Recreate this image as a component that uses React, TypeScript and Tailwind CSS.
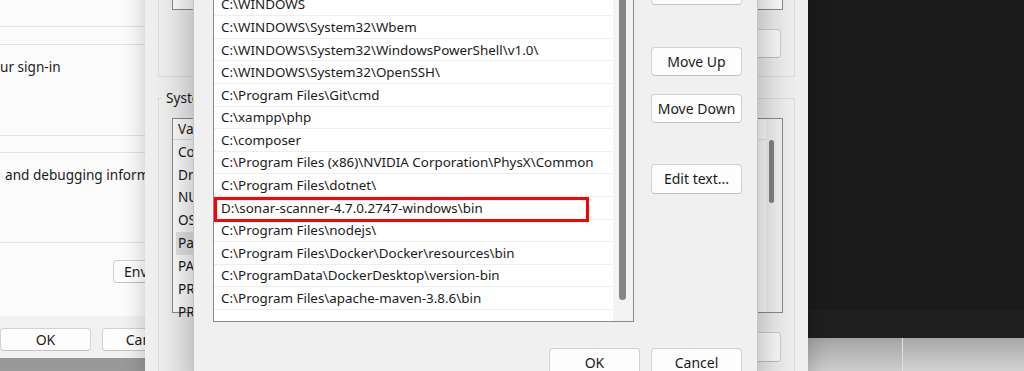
import React from 'react';

const font = "font-['Noto_Sans','Open_Sans',sans-serif]";

const pathEntries = [
  'C:\\WINDOWS\\system32',
  'C:\\WINDOWS',
  'C:\\WINDOWS\\System32\\Wbem',
  'C:\\WINDOWS\\System32\\WindowsPowerShell\\v1.0\\',
  'C:\\WINDOWS\\System32\\OpenSSH\\',
  'C:\\Program Files\\Git\\cmd',
  'C:\\xampp\\php',
  'C:\\composer',
  'C:\\Program Files (x86)\\NVIDIA Corporation\\PhysX\\Common',
  'C:\\Program Files\\dotnet\\',
  'D:\\sonar-scanner-4.7.0.2747-windows\\bin',
  'C:\\Program Files\\nodejs\\',
  'C:\\Program Files\\Docker\\Docker\\resources\\bin',
  'C:\\ProgramData\\DockerDesktop\\version-bin',
  'C:\\Program Files\\apache-maven-3.8.6\\bin',
];

const systemVars = [
  'ComSpec',
  'DriverData',
  'NUMBER_OF_PROCESSORS',
  'OS',
  'Path',
  'PATHEXT',
  'PROCESSOR_ARCHITECTURE',
  'PROCESSOR_IDENTIFIER',
];

const WinButton: React.FC<{ label: string; className?: string }> = ({ label, className = '' }) => (
  <button
    className={`bg-[#fdfdfd] border border-[#d1d1d1] border-b-[#c2c2c2] rounded-[4px] text-[14px] text-[#1b1b1b] leading-none flex items-center justify-center whitespace-nowrap ${className}`}
  >
    {label}
  </button>
);

const LeftDialog: React.FC = () => (
  <div className="absolute left-0 top-0 w-[160px] h-[358px] bg-[#fbfbfb] flex flex-col text-[13.6px] text-[#1b1b1b] overflow-hidden">
    <div className="h-[27px] border-b border-[#e2e2e2]" />
    <div className="h-[17px]" />
    <div className="h-[92px] border-y border-[#e2e2e2] pt-[13px]">
      <div className="leading-[18px] whitespace-nowrap">ur sign-in</div>
    </div>
    <div className="h-[16px]" />
    <div className="h-[91px] border-y border-[#e2e2e2] pt-[13px] pl-[5px]">
      <div className="leading-[18px] whitespace-nowrap">and debugging information</div>
    </div>
    <div className="h-[73px] pt-[17px] pl-[113px]">
      <WinButton label="Environment Variables..." className="h-[23px] w-[180px] justify-start pl-[10px]" />
    </div>
    <div className="flex-1 bg-[#f1f1f1] flex gap-[11px] pt-[12px]">
      <WinButton label="OK" className="h-[23px] w-[91px] shrink-0" />
      <WinButton label="Cancel" className="h-[23px] w-[91px] shrink-0" />
    </div>
  </div>
);

const MiddleDialog: React.FC = () => (
  <div className="absolute left-[145px] top-[-100px] w-[663px] h-[520px] bg-[#f0f0f0] shadow-[0_0_22px_rgba(0,0,0,0.22)] px-[13px] pt-[10px] text-[13.6px] text-[#1b1b1b]">
    <div className="h-[167px] border border-[#dcdcdc] pl-[13px] pr-[11px] pt-[19px]">
      <div className="h-[80px] border border-[#8c8c8c] bg-white" />
      <div className="flex justify-end gap-[10px] mt-[19px] pr-[2px]">
        <WinButton label="Delete" className="h-[29px] w-[110px]" />
      </div>
    </div>
    <fieldset className="mt-[12px] border border-[#dcdcdc] pl-[13px] pr-[11px] h-[330px]">
      <legend className="-ml-[10px] px-[4px] leading-[18px]">System variables</legend>
      <div className="mt-[11px] h-[195px] border border-[#8c8c8c] bg-white flex">
        <div className="flex-1 flex flex-col">
          <div className="h-[27px] flex items-center pl-[5px] border-b border-[#e5e5e5]">
            <span className="w-[150px]">Variable</span>
            <span>Value</span>
          </div>
          {systemVars.map((v) => (
            <div key={v} className="h-[22.9px] shrink-0 flex items-center pl-[3px]">
              <span
                className={`w-[160px] h-full flex items-center pl-[2px] whitespace-nowrap ${v === 'Path' ? 'bg-[#e6e6e6]' : ''}`}
              >
                {v}
              </span>
            </div>
          ))}
        </div>
        <div className="w-[16px] bg-[#f4f4f4] pl-[3px] pt-[21px]">
          <div className="w-[5px] h-[63px] rounded-full bg-[#848484]" />
        </div>
      </div>
      <div className="flex justify-end mt-[19px] pr-[2px]">
        <WinButton label="Delete" className="h-[30px] w-[110px]" />
      </div>
    </fieldset>
  </div>
);

const EditDialog: React.FC = () => (
  <div className="absolute left-[193px] top-[-40px] w-[565px] h-[440px] bg-[#f0f0f0] border border-[#c4c4c4] shadow-[0_0_40px_rgba(0,0,0,0.34)] flex flex-col text-[13.4px] text-[#1b1b1b]">
    <div className="flex pt-[9px] pl-[19px]">
      <div className="w-[421px] h-[352px] border border-[#8a8a8a] bg-white flex shrink-0">
        <div className="flex-1 flex flex-col">
          {pathEntries.map((p) => (
            <div
              key={p}
              className="relative h-[22.6px] shrink-0 border-b border-[#eeeeee] pl-[7px] flex items-center whitespace-nowrap"
            >
              {p}
              {p.startsWith('D:') && (
                <span className="absolute left-0 top-0 w-[375px] h-[25px] border-[3px] border-[#ff0000]" />
              )}
            </div>
          ))}
        </div>
        <div className="w-[20px] bg-[#f3f3f3] pl-[6px] pt-[10px]">
          <div className="w-[7px] h-[319px] rounded-full bg-[#868686]" />
        </div>
      </div>
      <div className="ml-[17px] w-[91px] flex flex-col pt-[6px]">
        <WinButton label="Delete" className="h-[29px]" />
        <WinButton label="Move Up" className="h-[29px] mt-[42px]" />
        <WinButton label="Move Down" className="h-[29px] mt-[18px]" />
        <WinButton label="Edit text..." className="h-[30px] mt-[41px]" />
      </div>
    </div>
    <div className="flex justify-end gap-[11px] pr-[15px] mt-[26px]">
      <WinButton label="OK" className="h-[29px] w-[91px]" />
      <WinButton label="Cancel" className="h-[29px] w-[91px]" />
    </div>
  </div>
);

export default function App() {
  return (
    <div className={`relative w-[1024px] h-[371px] overflow-hidden bg-linear-to-b from-[#6e6e6e] to-[#9a9a9a] ${font}`}>
      <div className="absolute left-[808px] top-0 w-[216px] h-[371px] flex flex-col">
        <div className="h-[338px] bg-[#1b1b1b] flex flex-col justify-end">
          <div className="h-[28px] bg-[#1f1f1f]" />
        </div>
        <div className="flex-1 flex">
          <div className="w-[94px] bg-linear-to-b from-[#a4a4a4] to-[#cdcdcd]" />
          <div className="flex-1 border-l border-[#dedede] bg-linear-to-b from-[#a8a8a8] to-[#d2d2d2]" />
        </div>
      </div>
      <LeftDialog />
      <MiddleDialog />
      <EditDialog />
    </div>
  );
}
